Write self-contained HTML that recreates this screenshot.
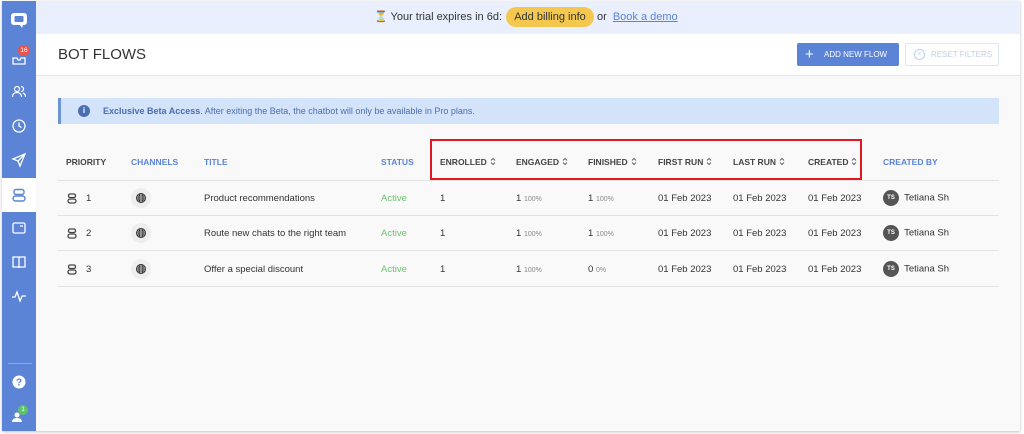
<!DOCTYPE html>
<html><head><meta charset="utf-8"><style>
*{box-sizing:border-box;margin:0;padding:0}
body{width:1024px;height:434px;background:#fff;font-family:"Liberation Sans",sans-serif;position:relative;overflow:hidden;color:#333}
.frame{position:absolute;left:2px;top:1px;width:1018px;height:430px;background:#f9f9f9;box-shadow:0 1px 3px rgba(0,0,0,.25)}
.side{position:absolute;left:2px;top:1px;width:34px;height:430px;background:#5b84d6}
.ic{position:absolute;left:0;width:34px;height:34px;display:flex;align-items:center;justify-content:center}
.top{position:absolute;left:36px;top:1px;width:984px;height:33px;background:#e9effc;font-size:11px;color:#333}
.hdr{position:absolute;left:36px;top:34px;width:984px;height:42px;background:#fff;border-bottom:1px solid #e6e6e6}
.banner{position:absolute;left:58px;top:98px;width:941px;height:26px;background:#d3e3f9;border-left:3px solid #6e95d8;font-size:9px;color:#4a6fb0;line-height:26px;padding-left:42px}
.th{position:absolute;top:157px;font-size:8.5px;font-weight:bold;color:#444;white-space:nowrap}
.th.b{color:#5b84d6}
.td{position:absolute;font-size:9.5px;color:#333;white-space:nowrap}
.pc{font-size:7px;color:#888}
.line{position:absolute;left:58px;width:941px;height:1px;background:#e3e3e3}
.srt{display:inline-block;margin-left:3px;vertical-align:-1px}
.r1{top:193px}.r2{top:228px}.r3{top:264px}
</style></head><body>
<div class="frame"></div>
<div class="side">
 <div class="ic" style="top:2px"><svg width="18" height="18" viewBox="0 0 18 18"><rect x="1" y="2" width="16" height="12" rx="3" fill="#fff"/><path d="M10 14 L12 17 L13 14Z" fill="#fff"/><rect x="4.5" y="5" width="9" height="6" rx="1" fill="#5b84d6"/></svg></div>
 <div class="ic" style="top:40px"><svg width="16" height="16" viewBox="0 0 16 16" fill="none" stroke="#fff" stroke-width="1.3"><path d="M2 8 L2 14 L14 14 L14 8 L10 8 L9 10 L7 10 L6 8Z"/></svg><span style="position:absolute;left:16px;top:4px;width:12px;height:11px;border-radius:6px;background:#e8554e;color:#fff;font-size:6.5px;line-height:11px;text-align:center">16</span></div>
 <div class="ic" style="top:74px"><svg width="16" height="16" viewBox="0 0 16 16" fill="none" stroke="#fff" stroke-width="1.2"><circle cx="6" cy="5" r="2.5"/><path d="M1.5 13c0-3 2-4.5 4.5-4.5s4.5 1.5 4.5 4.5M10 2.5a2.5 2.5 0 010 5M12 9c1.5.5 2.5 2 2.5 4"/></svg></div>
 <div class="ic" style="top:108px"><svg width="16" height="16" viewBox="0 0 16 16" fill="none" stroke="#fff" stroke-width="1.3"><circle cx="8" cy="8" r="6"/><path d="M8 4.5V8l2.5 1.5"/></svg></div>
 <div class="ic" style="top:142px"><svg width="16" height="16" viewBox="0 0 16 16" fill="none" stroke="#fff" stroke-width="1.3"><path d="M14 2L2 7l5 2 2 5z M7 9l7-7"/></svg></div>
 <div class="ic" style="top:177px;background:#fff"><svg width="16" height="16" viewBox="0 0 16 16" fill="none" stroke="#5b84d6" stroke-width="1.4"><rect x="3" y="2.5" width="10" height="5" rx="2"/><rect x="2" y="9" width="12" height="5" rx="2.5"/></svg></div>
 <div class="ic" style="top:210px"><svg width="16" height="16" viewBox="0 0 16 16" fill="none" stroke="#fff" stroke-width="1.3"><rect x="2" y="3" width="12" height="10" rx="1.5"/><path d="M9 6h3"/></svg></div>
 <div class="ic" style="top:244px"><svg width="16" height="16" viewBox="0 0 16 16" fill="none" stroke="#fff" stroke-width="1.3"><path d="M8 4v10M2 3h6v10H2zM8 3h6v10H8"/></svg></div>
 <div class="ic" style="top:278px"><svg width="16" height="16" viewBox="0 0 16 16" fill="none" stroke="#fff" stroke-width="1.3"><path d="M1 9h3l2-5 3 9 2-5h4"/></svg></div>
 <div style="position:absolute;left:6px;top:362px;width:24px;height:1px;background:#8aa8e3"></div>
 <div class="ic" style="top:364px"><svg width="14" height="14" viewBox="0 0 14 14"><circle cx="7" cy="7" r="6.5" fill="#fff"/><text x="7" y="10.5" font-size="10" font-weight="bold" text-anchor="middle" fill="#5b84d6" font-family="Liberation Sans">?</text></svg></div>
 <div class="ic" style="top:398px"><svg width="16" height="16" viewBox="0 0 16 16" fill="#fff"><circle cx="6" cy="7" r="2.5"/><path d="M1 14c0-3 2.5-4 5-4s5 1 5 4z"/></svg><span style="position:absolute;left:16px;top:6px;width:10px;height:10px;border-radius:5px;background:#5cc36a;color:#fff;font-size:6.5px;line-height:10px;text-align:center">1</span></div>
</div>
<div class="top">
 <div style="position:absolute;right:518px;top:8px;line-height:16px;white-space:nowrap">⏳ Your trial expires in 6d:</div>
 <div style="position:absolute;left:470px;top:6px;width:88px;height:20px;border-radius:10px;background:#f4c84e;text-align:center;line-height:20px;color:#333">Add billing info</div>
 <div style="position:absolute;left:561px;top:8px;line-height:16px">or <span style="color:#5b84d6;text-decoration:underline;margin-left:3px">Book a demo</span></div>
</div>
<div class="hdr">
 <div style="position:absolute;left:22px;top:12px;font-size:15px;color:#333">BOT FLOWS</div>
 <div style="position:absolute;left:761px;top:9px;width:102px;height:23px;background:#5b84d6;border-radius:2px;color:#fff;font-size:8px;line-height:23px;padding-left:27px">ADD NEW FLOW<span style="position:absolute;left:8px;top:0;font-size:15px;font-weight:normal">+</span></div>
 <div style="position:absolute;left:869px;top:9px;width:94px;height:23px;border:1px solid #dde6f6;border-radius:2px;color:#c3cfe6;font-size:8px;line-height:21px;padding-left:25px">RESET FILTERS<span style="position:absolute;left:8px;top:5px;width:11px;height:11px;border:1px solid #c3cfe6;border-radius:50%;font-size:7px;line-height:9px;text-align:center">×</span></div>
</div>
<div class="banner"><span style="position:absolute;left:17px;top:7px;width:12px;height:12px;border-radius:50%;background:#4a6fb0;color:#fff;font-size:8px;line-height:12px;text-align:center;font-weight:bold">i</span><b>Exclusive Beta Access</b>. After exiting the Beta, the chatbot will only be available in Pro plans.</div>
<div style="position:absolute;left:430px;top:139px;width:432px;height:41px;border:2px solid #e0191e"></div>
<div class="th" style="left:66px">PRIORITY</div>
<div class="th b" style="left:131px">CHANNELS</div>
<div class="th b" style="left:204px">TITLE</div>
<div class="th b" style="left:381px">STATUS</div>
<div class="th" style="left:440px">ENROLLED<svg class="srt" width="6" height="9" viewBox="0 0 6 9" fill="none" stroke="#666"><path d="M1 3.5L3 1.5 5 3.5M1 5.5L3 7.5 5 5.5"/></svg></div>
<div class="th" style="left:516px">ENGAGED<svg class="srt" width="6" height="9" viewBox="0 0 6 9" fill="none" stroke="#666"><path d="M1 3.5L3 1.5 5 3.5M1 5.5L3 7.5 5 5.5"/></svg></div>
<div class="th" style="left:588px">FINISHED<svg class="srt" width="6" height="9" viewBox="0 0 6 9" fill="none" stroke="#666"><path d="M1 3.5L3 1.5 5 3.5M1 5.5L3 7.5 5 5.5"/></svg></div>
<div class="th" style="left:658px">FIRST RUN<svg class="srt" width="6" height="9" viewBox="0 0 6 9" fill="none" stroke="#666"><path d="M1 3.5L3 1.5 5 3.5M1 5.5L3 7.5 5 5.5"/></svg></div>
<div class="th" style="left:733px">LAST RUN<svg class="srt" width="6" height="9" viewBox="0 0 6 9" fill="none" stroke="#666"><path d="M1 3.5L3 1.5 5 3.5M1 5.5L3 7.5 5 5.5"/></svg></div>
<div class="th" style="left:808px">CREATED<svg class="srt" width="6" height="9" viewBox="0 0 6 9" fill="none" stroke="#666"><path d="M1 3.5L3 1.5 5 3.5M1 5.5L3 7.5 5 5.5"/></svg></div>
<div class="th b" style="left:883px">CREATED BY</div>
<div class="line" style="top:180px"></div>
<div class="line" style="top:215px"></div>
<div class="line" style="top:250px"></div>
<div class="line" style="top:286px"></div>

<div class="td r1" style="left:67px"><svg width="10" height="11" viewBox="0 0 10 11" fill="none" stroke="#444" stroke-width="1.3" style="vertical-align:-1px"><rect x="1.5" y="1" width="7" height="3.5" rx="1.5"/><rect x="1" y="6" width="8" height="4" rx="2"/></svg></div><div class="td r1" style="left:86px">1</div>
<div class="td r2" style="left:67px"><svg width="10" height="11" viewBox="0 0 10 11" fill="none" stroke="#444" stroke-width="1.3" style="vertical-align:-1px"><rect x="1.5" y="1" width="7" height="3.5" rx="1.5"/><rect x="1" y="6" width="8" height="4" rx="2"/></svg></div><div class="td r2" style="left:86px">2</div>
<div class="td r3" style="left:67px"><svg width="10" height="11" viewBox="0 0 10 11" fill="none" stroke="#444" stroke-width="1.3" style="vertical-align:-1px"><rect x="1.5" y="1" width="7" height="3.5" rx="1.5"/><rect x="1" y="6" width="8" height="4" rx="2"/></svg></div><div class="td r3" style="left:86px">3</div>

<div style="position:absolute;left:131px;top:188px;width:20px;height:20px;border-radius:50%;background:#eee"><svg width="20" height="20" viewBox="0 0 20 20" fill="none" stroke="#333" stroke-width="1"><circle cx="10" cy="10" r="4.5"/><ellipse cx="10" cy="10" rx="2" ry="4.5"/><path d="M5.5 10h9M6.3 8h7.4M6.3 12h7.4"/></svg></div>
<div style="position:absolute;left:131px;top:223px;width:20px;height:20px;border-radius:50%;background:#eee"><svg width="20" height="20" viewBox="0 0 20 20" fill="none" stroke="#333" stroke-width="1"><circle cx="10" cy="10" r="4.5"/><ellipse cx="10" cy="10" rx="2" ry="4.5"/><path d="M5.5 10h9M6.3 8h7.4M6.3 12h7.4"/></svg></div>
<div style="position:absolute;left:131px;top:259px;width:20px;height:20px;border-radius:50%;background:#eee"><svg width="20" height="20" viewBox="0 0 20 20" fill="none" stroke="#333" stroke-width="1"><circle cx="10" cy="10" r="4.5"/><ellipse cx="10" cy="10" rx="2" ry="4.5"/><path d="M5.5 10h9M6.3 8h7.4M6.3 12h7.4"/></svg></div>

<div class="td r1" style="left:204px">Product recommendations</div>
<div class="td r2" style="left:204px">Route new chats to the right team</div>
<div class="td r3" style="left:204px">Offer a special discount</div>
<div class="td r1" style="left:381px;color:#6cc36f">Active</div>
<div class="td r2" style="left:381px;color:#6cc36f">Active</div>
<div class="td r3" style="left:381px;color:#6cc36f">Active</div>
<div class="td r1" style="left:440px">1</div>
<div class="td r2" style="left:440px">1</div>
<div class="td r3" style="left:440px">1</div>
<div class="td r1" style="left:516px">1 <span class="pc">100%</span></div>
<div class="td r2" style="left:516px">1 <span class="pc">100%</span></div>
<div class="td r3" style="left:516px">1 <span class="pc">100%</span></div>
<div class="td r1" style="left:588px">1 <span class="pc">100%</span></div>
<div class="td r2" style="left:588px">1 <span class="pc">100%</span></div>
<div class="td r3" style="left:588px">0 <span class="pc">0%</span></div>
<div class="td r1" style="left:658px">01 Feb 2023</div>
<div class="td r2" style="left:658px">01 Feb 2023</div>
<div class="td r3" style="left:658px">01 Feb 2023</div>
<div class="td r1" style="left:733px">01 Feb 2023</div>
<div class="td r2" style="left:733px">01 Feb 2023</div>
<div class="td r3" style="left:733px">01 Feb 2023</div>
<div class="td r1" style="left:808px">01 Feb 2023</div>
<div class="td r2" style="left:808px">01 Feb 2023</div>
<div class="td r3" style="left:808px">01 Feb 2023</div>
<div class="td" style="left:883px;top:190px"><span style="display:inline-block;width:16px;height:16px;border-radius:50%;background:#555;color:#fff;font-size:6px;line-height:16px;text-align:center;font-weight:bold;vertical-align:middle">TS</span>&nbsp; Tetiana Sh</div>
<div class="td" style="left:883px;top:225px"><span style="display:inline-block;width:16px;height:16px;border-radius:50%;background:#555;color:#fff;font-size:6px;line-height:16px;text-align:center;font-weight:bold;vertical-align:middle">TS</span>&nbsp; Tetiana Sh</div>
<div class="td" style="left:883px;top:261px"><span style="display:inline-block;width:16px;height:16px;border-radius:50%;background:#555;color:#fff;font-size:6px;line-height:16px;text-align:center;font-weight:bold;vertical-align:middle">TS</span>&nbsp; Tetiana Sh</div>
</body></html>
